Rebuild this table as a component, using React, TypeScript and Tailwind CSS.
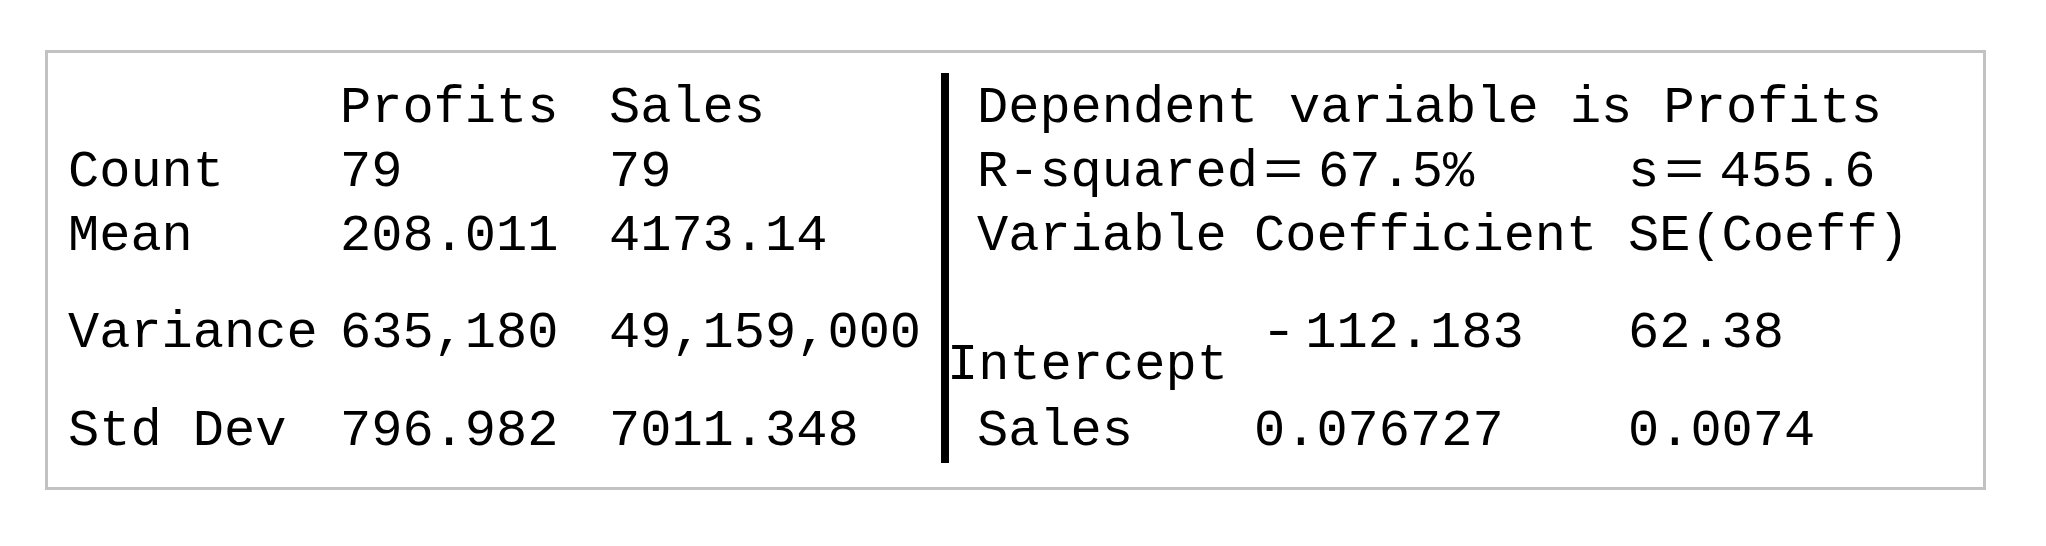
import React from 'react';

const leftRows = [
  { cells: ['', 'Profits', 'Sales'], cls: '' },
  { cells: ['Count', '79', '79'], cls: '' },
  { cells: ['Mean', '208.011', '4173.14'], cls: '' },
  { cells: ['Variance', '635,180', '49,159,000'], cls: 'mt-[33px]' },
  { cells: ['Std Dev', '796.982', '7011.348'], cls: 'mt-[34px]' },
];

const LeftTable = () => (
  <div className="w-[893px] pl-[20px] pt-[24px]">
    {leftRows.map((r, i) => (
      <div key={i} className={`grid grid-cols-[272px_269px_1fr] h-[64px] ${r.cls}`}>
        {r.cells.map((c, j) => (
          <span key={j} className="whitespace-pre">{c}</span>
        ))}
      </div>
    ))}
  </div>
);

// "x = value" with the wide equals sign of the original printout
const Eq = ({ left, right }: { left: string; right: string }) => (
  <span className="whitespace-pre">
    {left}
    <span className="inline-block ml-[5px] scale-x-[1.3] origin-left">=</span>
    <span className="ml-[24px]">{right}</span>
  </span>
);

const RegressionTable = () => (
  <div className="flex-1 pl-[28px] pt-[24px]">
    <div className="h-[64px] whitespace-pre">Dependent variable is Profits</div>
    <div className="grid grid-cols-[277px_374px_1fr] h-[64px]">
      <span className="col-span-2">
        <Eq left="R-squared" right="67.5%" />
      </span>
      <Eq left="s" right="455.6" />
    </div>
    <div className="grid grid-cols-[277px_374px_1fr] h-[64px]">
      <span>Variable</span>
      <span>Coefficient</span>
      <span>SE(Coeff)</span>
    </div>
    <div className="grid grid-cols-[277px_374px_1fr] h-[64px] mt-[33px]">
      <span></span>
      <span className="whitespace-pre">
        <span className="inline-block ml-[6px] scale-x-[1.2] origin-left">-</span>
        <span className="ml-[14px]">112.183</span>
      </span>
      <span>62.38</span>
    </div>
    <div className="h-[64px] -mt-[32px] -ml-[30px]">Intercept</div>
    <div className="grid grid-cols-[277px_374px_1fr] h-[64px] mt-[2px]">
      <span>Sales</span>
      <span>0.076727</span>
      <span>0.0074</span>
    </div>
  </div>
);

export default function App() {
  return (
    <div className="w-[2046px] h-[546px] bg-white overflow-hidden pt-[50px] pl-[45px] text-black font-['Courier_New','Courier','Nimbus_Mono_PS','FreeMono','Liberation_Mono',monospace] text-[52px] leading-[64px]">
      <div className="flex w-[1941px] h-[440px] border-[3px] border-[#c2c2c2] bg-white">
        <LeftTable />
        <div className="w-[8px] h-[390px] mt-[20px] bg-black shrink-0" />
        <RegressionTable />
      </div>
    </div>
  );
}
